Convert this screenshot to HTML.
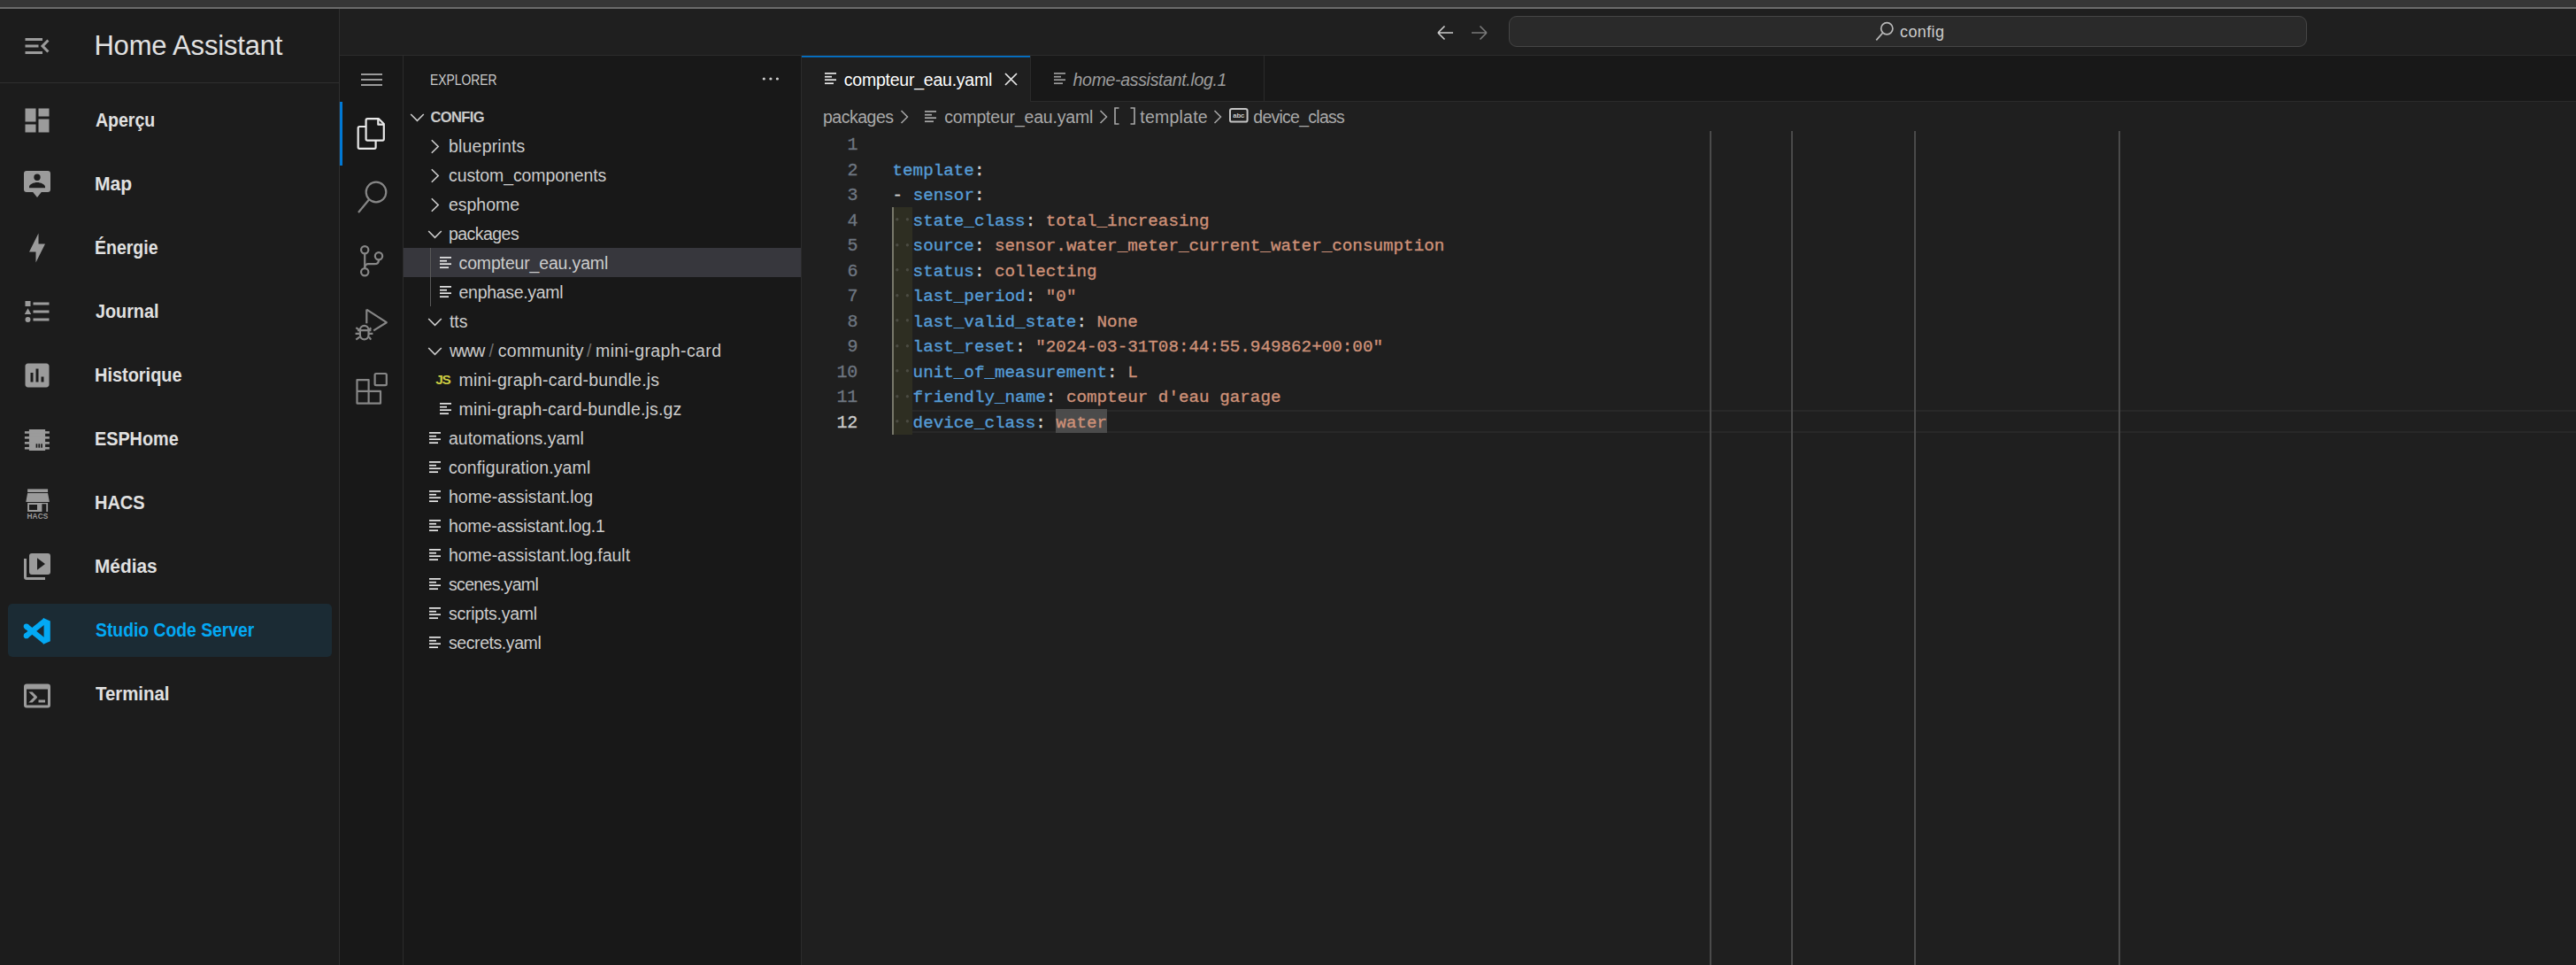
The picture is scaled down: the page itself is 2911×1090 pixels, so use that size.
<!DOCTYPE html><html><head><meta charset="utf-8"><style>html,body{margin:0;padding:0;}body{width:2911px;height:1090px;overflow:hidden;position:relative;background:#1c1c1c;}</style></head><body>
<div style="position:absolute;left:0px;top:0px;width:2911px;height:8px;background:#363636;"></div>
<div style="position:absolute;left:0px;top:8px;width:2911px;height:2px;background:#6b6b6b;"></div>
<div style="position:absolute;left:0px;top:10px;width:383px;height:1080px;background:#1c1c1c;"></div>
<div style="position:absolute;left:383px;top:10px;width:1px;height:1080px;background:#2f2f2f;"></div>
<div style="position:absolute;left:0px;top:93px;width:383px;height:1px;background:#2f2f2f;"></div>
<svg style="position:absolute;left:24px;top:34px;" width="36" height="36" viewBox="0 0 24 24"><path fill="#9b9b9b" d="M21,15.61L19.59,17L14.58,12L19.59,7L21,8.39L17.44,12L21,15.61M3,6H16V8H3V6M3,13V11H13V13H3M3,18V16H16V18H3Z"/></svg>
<div id="t_ha" style="position:absolute;left:106.40px;top:35.76px;font-family:'Liberation Sans', sans-serif;font-size:31px;line-height:31px;color:#e1e1e1;font-weight:normal;font-style:normal;letter-spacing:-0.177px;white-space:pre;">Home Assistant</div>
<svg style="position:absolute;left:24px;top:118px;" width="36" height="36" viewBox="0 0 24 24"><g fill="#9b9b9b"><path d="M13,3V9H21V3M13,21H21V11H13M3,21H11V15H3M3,13H11V3H3V13Z"/></g></svg>
<div id="sb0" style="position:absolute;left:108.00px;top:125.38px;font-family:'Liberation Sans', sans-serif;font-size:22px;line-height:22px;color:#e1e1e1;font-weight:bold;font-style:normal;letter-spacing:0.000px;white-space:pre;transform:scaleX(0.8866);transform-origin:0 0;">Aperçu</div>
<svg style="position:absolute;left:24px;top:190px;" width="36" height="36" viewBox="0 0 24 24"><g fill="#9b9b9b"><path fill-rule="evenodd" d="M4 2H20A2 2 0 0 1 22 4V16A2 2 0 0 1 20 18H15.2L12 22L8.8 18H4A2 2 0 0 1 2 16V4A2 2 0 0 1 4 2ZM12 4.4A2.45 2.45 0 1 0 12 9.3A2.45 2.45 0 1 0 12 4.4ZM6 14.8H18V14C18 12 14.5 10.6 12 10.6S6 12 6 14Z"/></g></svg>
<div id="sb1" style="position:absolute;left:107.00px;top:197.38px;font-family:'Liberation Sans', sans-serif;font-size:22px;line-height:22px;color:#e1e1e1;font-weight:bold;font-style:normal;letter-spacing:0.000px;white-space:pre;transform:scaleX(0.9574);transform-origin:0 0;">Map</div>
<svg style="position:absolute;left:24px;top:262px;" width="36" height="36" viewBox="0 0 24 24"><g fill="#9b9b9b"><path d="M11 15H6L13 1V9H18L11 23V15Z"/></g></svg>
<div id="sb2" style="position:absolute;left:107.00px;top:269.38px;font-family:'Liberation Sans', sans-serif;font-size:22px;line-height:22px;color:#e1e1e1;font-weight:bold;font-style:normal;letter-spacing:0.000px;white-space:pre;transform:scaleX(0.8860);transform-origin:0 0;">Énergie</div>
<svg style="position:absolute;left:24px;top:334px;" width="36" height="36" viewBox="0 0 24 24"><g fill="#9b9b9b"><path d="M5,9.5L7.5,14H2.5L5,9.5M3,4H7V8H3V4M5,20A2,2 0 0,0 7,18A2,2 0 0,0 5,16A2,2 0 0,0 3,18A2,2 0 0,0 5,20M9,5V7H21V5H9M9,19H21V17H9V19M9,13H21V11H9V13Z"/></g></svg>
<div id="sb3" style="position:absolute;left:108.00px;top:341.38px;font-family:'Liberation Sans', sans-serif;font-size:22px;line-height:22px;color:#e1e1e1;font-weight:bold;font-style:normal;letter-spacing:0.000px;white-space:pre;transform:scaleX(0.8990);transform-origin:0 0;">Journal</div>
<svg style="position:absolute;left:24px;top:406px;" width="36" height="36" viewBox="0 0 24 24"><g fill="#9b9b9b"><path d="M19 3H5C3.9 3 3 3.9 3 5V19C3 20.1 3.9 21 5 21H19C20.1 21 21 20.1 21 19V5C21 3.9 20.1 3 19 3M9 17H7V10H9V17M13 17H11V7H13V17M17 17H15V13H17V17Z"/></g></svg>
<div id="sb4" style="position:absolute;left:107.00px;top:413.38px;font-family:'Liberation Sans', sans-serif;font-size:22px;line-height:22px;color:#e1e1e1;font-weight:bold;font-style:normal;letter-spacing:0.000px;white-space:pre;transform:scaleX(0.9063);transform-origin:0 0;">Historique</div>
<svg style="position:absolute;left:0px;top:0px;" width="60" height="600" viewBox="0 0 60 600"><g fill="#9b9b9b"><rect x="32.9" y="485" width="18.2" height="24"/><rect x="27.9" y="487.15" width="28" height="2.6"/><rect x="27.9" y="493.05" width="28" height="2.6"/><rect x="27.9" y="499.05" width="28" height="2.6"/><rect x="27.9" y="504.95" width="28" height="2.6"/></g><g fill="#1c1c1c"><rect x="40.6" y="501.3" width="1.7" height="4.4"/><rect x="43.4" y="501.3" width="1.7" height="4.4"/><rect x="46.2" y="501.3" width="1.7" height="4.4"/></g></svg>
<div id="sb5" style="position:absolute;left:107.00px;top:485.38px;font-family:'Liberation Sans', sans-serif;font-size:22px;line-height:22px;color:#e1e1e1;font-weight:bold;font-style:normal;letter-spacing:0.000px;white-space:pre;transform:scaleX(0.9001);transform-origin:0 0;">ESPHome</div>
<svg style="position:absolute;left:0px;top:0px;" width="60" height="600" viewBox="0 0 60 600"><g fill="#9b9b9b"><rect x="31.1" y="552.4" width="23" height="3.6"/><path d="M31.1 556.9H54.1L55.9 567H29.3Z"/><path fill-rule="evenodd" d="M31.1 568H54.1V578H52.3V569.3H47.4V578H31.1ZM33 570V576H42V570Z"/><text x="42.5" y="586" font-family="Liberation Sans" font-weight="bold" font-size="8.3" text-anchor="middle" letter-spacing="0.15">HACS</text></g></svg>
<div id="sb6" style="position:absolute;left:107.00px;top:557.38px;font-family:'Liberation Sans', sans-serif;font-size:22px;line-height:22px;color:#e1e1e1;font-weight:bold;font-style:normal;letter-spacing:0.000px;white-space:pre;transform:scaleX(0.9068);transform-origin:0 0;">HACS</div>
<svg style="position:absolute;left:24px;top:622px;" width="36" height="36" viewBox="0 0 24 24"><g fill="#9b9b9b"><path d="M4,6H2V20A2,2 0 0,0 4,22H18V20H4V6M20,2H8A2,2 0 0,0 6,4V16A2,2 0 0,0 8,18H20A2,2 0 0,0 22,16V4A2,2 0 0,0 20,2M12,14.5V5.5L18,10L12,14.5Z"/></g></svg>
<div id="sb7" style="position:absolute;left:107.00px;top:629.38px;font-family:'Liberation Sans', sans-serif;font-size:22px;line-height:22px;color:#e1e1e1;font-weight:bold;font-style:normal;letter-spacing:0.000px;white-space:pre;transform:scaleX(0.9463);transform-origin:0 0;">Médias</div>
<div style="position:absolute;left:9px;top:682px;width:366px;height:60px;background:#1b2b34;border-radius:5px;"></div>
<svg style="position:absolute;left:0px;top:0px;" width="60" height="760" viewBox="0 0 60 760"><g stroke="#03a9f4" stroke-width="6.2" fill="none"><path d="M51.5 700.6L29.8 718.2"/><path d="M51.5 725.2L29.8 707.6"/></g><circle cx="29.8" cy="718.2" r="3.1" fill="#03a9f4"/><circle cx="29.8" cy="707.6" r="3.1" fill="#03a9f4"/><path fill="#03a9f4" d="M48.8 698.1L56.8 701.6V724.2L48.8 727.7L49.6 719V706.4Z"/></svg>
<div id="sb8" style="position:absolute;left:108.00px;top:701.38px;font-family:'Liberation Sans', sans-serif;font-size:22px;line-height:22px;color:#03a9f4;font-weight:bold;font-style:normal;letter-spacing:0.000px;white-space:pre;transform:scaleX(0.8783);transform-origin:0 0;">Studio Code Server</div>
<svg style="position:absolute;left:24px;top:767.5px;" width="36" height="36" viewBox="0 0 24 24"><g fill="#9b9b9b"><path d="M20,19V7H4V19H20M20,3A2,2 0 0,1 22,5V19A2,2 0 0,1 20,21H4A2,2 0 0,1 2,19V5C2,3.89 2.9,3 4,3H20M13,17V15H18V17H13M9.58,13L5.57,9H8.4L11.7,12.3C12.09,12.69 12.09,13.33 11.7,13.72L8.42,17H5.59L9.58,13Z"/></g></svg>
<div id="sb9" style="position:absolute;left:108.00px;top:773.38px;font-family:'Liberation Sans', sans-serif;font-size:22px;line-height:22px;color:#e1e1e1;font-weight:bold;font-style:normal;letter-spacing:0.000px;white-space:pre;transform:scaleX(0.9269);transform-origin:0 0;">Terminal</div>
<div style="position:absolute;left:384px;top:10px;width:2527px;height:52px;background:#1f1f1f;"></div>
<div style="position:absolute;left:384px;top:62px;width:2527px;height:1px;background:#2b2b2b;"></div>
<svg style="position:absolute;left:1620px;top:24px;" width="26" height="26" viewBox="0 0 26 26"><path d="M5 13H22M5 13L12.5 5.5M5 13L12.5 20.5" stroke="#cccccc" stroke-width="1.6" fill="none"/></svg>
<svg style="position:absolute;left:1659px;top:24px;" width="26" height="26" viewBox="0 0 26 26"><path d="M21 13H4M21 13L13.5 5.5M21 13L13.5 20.5" stroke="#7a7a7a" stroke-width="1.6" fill="none"/></svg>
<div style="position:absolute;left:1705px;top:18px;width:902px;height:35px;background:#2a2a2a;box-sizing:border-box;border:1px solid #454545;border-radius:9px;"></div>
<svg style="position:absolute;left:2117px;top:23px;" width="26" height="26" viewBox="0 0 26 26"><circle cx="15.3" cy="9.2" r="6.6" stroke="#b8b8b8" stroke-width="1.7" fill="none"/><path d="M10.7 14L3.3 22.4" stroke="#b8b8b8" stroke-width="1.8" fill="none"/></svg>
<div id="t_cfg" style="position:absolute;left:2147.00px;top:26.76px;font-family:'Liberation Sans', sans-serif;font-size:18px;line-height:18px;color:#cccccc;font-weight:normal;font-style:normal;letter-spacing:0.400px;white-space:pre;">config</div>
<div style="position:absolute;left:384px;top:63px;width:71px;height:1027px;background:#181818;"></div>
<div style="position:absolute;left:455px;top:63px;width:1px;height:1027px;background:#2b2b2b;"></div>
<div style="position:absolute;left:408px;top:83px;width:24px;height:2px;background:#9a9a9a;"></div>
<div style="position:absolute;left:408px;top:89px;width:24px;height:2px;background:#9a9a9a;"></div>
<div style="position:absolute;left:408px;top:95px;width:24px;height:2px;background:#9a9a9a;"></div>
<div style="position:absolute;left:384px;top:115px;width:3px;height:72px;background:#0078d4;"></div>
<svg style="position:absolute;left:398px;top:128px;" width="44" height="44" viewBox="0 0 44 44"><g stroke="#e8e8e8" stroke-width="2.2" fill="none" stroke-linejoin="round"><path d="M17.2 6.2H30L35.8 12V29.1A1.6 1.6 0 0 1 34.2 30.7H17.2A1.6 1.6 0 0 1 15.6 29.1V7.8A1.6 1.6 0 0 1 17.2 6.2Z"/><path d="M29.3 6.4V12.7H35.6"/><path d="M15.6 15H8.3A1.6 1.6 0 0 0 6.7 16.6V38.2A1.6 1.6 0 0 0 8.3 39.8H25A1.6 1.6 0 0 0 26.6 38.2V30.7"/></g></svg>
<svg style="position:absolute;left:399px;top:200px;" width="44" height="44" viewBox="0 0 44 44"><g stroke="#868686" stroke-width="2.2" fill="none"><circle cx="26" cy="17" r="11.3"/><path d="M18.2 25.2L6 40"/></g></svg>
<svg style="position:absolute;left:398px;top:272px;" width="44" height="44" viewBox="0 0 44 44"><g stroke="#868686" stroke-width="2.2" fill="none"><circle cx="14.2" cy="10.3" r="4.15"/><circle cx="14.2" cy="35.3" r="4.15"/><circle cx="30" cy="17.3" r="4.15"/><path d="M14.2 14.4V31.2"/><path d="M30 21.4C30 24.6 28.4 26.2 25.4 26.2H18.2C15.9 26.2 14.2 27.6 14.2 30.4"/></g></svg>
<svg style="position:absolute;left:398px;top:344px;" width="44" height="44" viewBox="0 0 44 44"><g stroke="#868686" stroke-width="2.2" fill="none" stroke-linejoin="round"><path d="M16.3 5.6V21.2M16.3 5.6L38.8 20.2L24.2 29.4"/><path d="M8.9 28.6A4.8 4.8 0 0 1 18.5 28.6V34.5A4.8 4.8 0 0 1 8.9 34.5Z"/><path d="M6 29.1H21.4M3.6 32.9H8.9M18.5 32.9H23.4M4.3 26.2L8.4 29M21.2 26.2L19 29M4.3 39.6L8.4 36.6M21.2 39.6L19 36.6"/></g></svg>
<svg style="position:absolute;left:398px;top:416px;" width="44" height="44" viewBox="0 0 44 44"><g stroke="#868686" stroke-width="2.2" fill="none" stroke-linejoin="round"><path d="M5.5 13.1H18.6V39.6H5.5Z M5.5 25.9H32V39.6H18.6"/><rect x="25.6" y="6" width="13.2" height="13.2" rx="1.4"/></g></svg>
<div style="position:absolute;left:456px;top:63px;width:449px;height:1027px;background:#181818;"></div>
<div style="position:absolute;left:905px;top:63px;width:1px;height:1027px;background:#2b2b2b;"></div>
<div id="t_expl" style="position:absolute;left:486.20px;top:82.03px;font-family:'Liberation Sans', sans-serif;font-size:16.5px;line-height:16.5px;color:#cccccc;font-weight:normal;font-style:normal;letter-spacing:0.000px;white-space:pre;transform:scaleX(0.8409);transform-origin:0 0;">EXPLORER</div>
<svg style="position:absolute;left:858px;top:82px;" width="26" height="14" viewBox="0 0 26 14"><g fill="#cccccc"><circle cx="5.3" cy="7" r="1.6"/><circle cx="12.9" cy="7" r="1.6"/><circle cx="20.4" cy="7" r="1.6"/></g></svg>
<svg style="position:absolute;left:463px;top:126.5px;" width="18" height="12" viewBox="0 0 18 12"><path d="M1.2 2L8.5 9.3L15.8 2" stroke="#cccccc" stroke-width="1.6" fill="none"/></svg>
<div id="tr0" style="position:absolute;left:486.40px;top:123.53px;font-family:'Liberation Sans', sans-serif;font-size:16.5px;line-height:16.5px;color:#cccccc;font-weight:bold;font-style:normal;letter-spacing:-0.580px;white-space:pre;">CONFIG</div>
<svg style="position:absolute;left:486px;top:157.0px;" width="12" height="18" viewBox="0 0 12 18"><path d="M1.8 1.2L9.2 8.5L1.8 15.8" stroke="#cccccc" stroke-width="1.6" fill="none"/></svg>
<div id="tr1" style="position:absolute;left:507.00px;top:156.49px;font-family:'Liberation Sans', sans-serif;font-size:19.5px;line-height:19.5px;color:#cccccc;font-weight:normal;font-style:normal;letter-spacing:0.193px;white-space:pre;">blueprints</div>
<svg style="position:absolute;left:486px;top:190.0px;" width="12" height="18" viewBox="0 0 12 18"><path d="M1.8 1.2L9.2 8.5L1.8 15.8" stroke="#cccccc" stroke-width="1.6" fill="none"/></svg>
<div id="tr2" style="position:absolute;left:507.00px;top:189.49px;font-family:'Liberation Sans', sans-serif;font-size:19.5px;line-height:19.5px;color:#cccccc;font-weight:normal;font-style:normal;letter-spacing:-0.108px;white-space:pre;">custom_components</div>
<svg style="position:absolute;left:486px;top:223.0px;" width="12" height="18" viewBox="0 0 12 18"><path d="M1.8 1.2L9.2 8.5L1.8 15.8" stroke="#cccccc" stroke-width="1.6" fill="none"/></svg>
<div id="tr3" style="position:absolute;left:507.00px;top:222.49px;font-family:'Liberation Sans', sans-serif;font-size:19.5px;line-height:19.5px;color:#cccccc;font-weight:normal;font-style:normal;letter-spacing:-0.035px;white-space:pre;">esphome</div>
<svg style="position:absolute;left:482.5px;top:259.0px;" width="18" height="12" viewBox="0 0 18 12"><path d="M1.2 2L8.5 9.3L15.8 2" stroke="#cccccc" stroke-width="1.6" fill="none"/></svg>
<div id="tr4" style="position:absolute;left:507.00px;top:255.49px;font-family:'Liberation Sans', sans-serif;font-size:19.5px;line-height:19.5px;color:#cccccc;font-weight:normal;font-style:normal;letter-spacing:-0.549px;white-space:pre;">packages</div>
<div style="position:absolute;left:456px;top:280px;width:449px;height:33px;background:#37373d;"></div>
<svg style="position:absolute;left:497px;top:290.0px;" width="14" height="14" viewBox="0 0 14 14"><g fill="#e8e8e8"><rect x="0" y="0.05" width="13" height="1.7"/><rect x="0" y="3.85" width="8" height="1.7"/><rect x="0" y="7.35" width="13" height="1.7"/><rect x="0" y="11.35" width="10" height="1.7"/></g></svg>
<div id="tr5" style="position:absolute;left:518.60px;top:288.49px;font-family:'Liberation Sans', sans-serif;font-size:19.5px;line-height:19.5px;color:#cccccc;font-weight:normal;font-style:normal;letter-spacing:-0.164px;white-space:pre;">compteur_eau.yaml</div>
<svg style="position:absolute;left:497px;top:323.0px;" width="14" height="14" viewBox="0 0 14 14"><g fill="#e8e8e8"><rect x="0" y="0.05" width="13" height="1.7"/><rect x="0" y="3.85" width="8" height="1.7"/><rect x="0" y="7.35" width="13" height="1.7"/><rect x="0" y="11.35" width="10" height="1.7"/></g></svg>
<div id="tr6" style="position:absolute;left:518.60px;top:321.49px;font-family:'Liberation Sans', sans-serif;font-size:19.5px;line-height:19.5px;color:#cccccc;font-weight:normal;font-style:normal;letter-spacing:-0.315px;white-space:pre;">enphase.yaml</div>
<svg style="position:absolute;left:482.5px;top:358.0px;" width="18" height="12" viewBox="0 0 18 12"><path d="M1.2 2L8.5 9.3L15.8 2" stroke="#cccccc" stroke-width="1.6" fill="none"/></svg>
<div id="tr7" style="position:absolute;left:508.00px;top:354.49px;font-family:'Liberation Sans', sans-serif;font-size:19.5px;line-height:19.5px;color:#cccccc;font-weight:normal;font-style:normal;letter-spacing:-0.100px;white-space:pre;">tts</div>
<svg style="position:absolute;left:482.5px;top:391.0px;" width="18" height="12" viewBox="0 0 18 12"><path d="M1.2 2L8.5 9.3L15.8 2" stroke="#cccccc" stroke-width="1.6" fill="none"/></svg>
<div id="trw1" style="position:absolute;left:508.00px;top:387.49px;font-family:'Liberation Sans', sans-serif;font-size:19.5px;line-height:19.5px;color:#cccccc;font-weight:normal;font-style:normal;letter-spacing:-1.000px;white-space:pre;">www</div>
<div style="position:absolute;left:552.50px;top:387.49px;font-family:'Liberation Sans', sans-serif;font-size:19.5px;line-height:19.5px;color:#6f6f6f;font-weight:normal;font-style:normal;letter-spacing:0.000px;white-space:pre;">/</div>
<div id="trw3" style="position:absolute;left:562.80px;top:387.49px;font-family:'Liberation Sans', sans-serif;font-size:19.5px;line-height:19.5px;color:#cccccc;font-weight:normal;font-style:normal;letter-spacing:0.300px;white-space:pre;">community</div>
<div style="position:absolute;left:663.00px;top:387.49px;font-family:'Liberation Sans', sans-serif;font-size:19.5px;line-height:19.5px;color:#6f6f6f;font-weight:normal;font-style:normal;letter-spacing:0.000px;white-space:pre;">/</div>
<div id="trw5" style="position:absolute;left:673.00px;top:387.49px;font-family:'Liberation Sans', sans-serif;font-size:19.5px;line-height:19.5px;color:#cccccc;font-weight:normal;font-style:normal;letter-spacing:0.394px;white-space:pre;">mini-graph-card</div>
<div style="position:absolute;left:492.30px;top:421.46px;font-family:'Liberation Sans', sans-serif;font-size:15.4px;line-height:15.4px;color:#cbcb41;font-weight:bold;font-style:normal;letter-spacing:-1.300px;white-space:pre;">JS</div>
<div id="tr9" style="position:absolute;left:518.60px;top:420.49px;font-family:'Liberation Sans', sans-serif;font-size:19.5px;line-height:19.5px;color:#cccccc;font-weight:normal;font-style:normal;letter-spacing:0.225px;white-space:pre;">mini-graph-card-bundle.js</div>
<svg style="position:absolute;left:497px;top:455.0px;" width="14" height="14" viewBox="0 0 14 14"><g fill="#e8e8e8"><rect x="0" y="0.05" width="13" height="1.7"/><rect x="0" y="3.85" width="8" height="1.7"/><rect x="0" y="7.35" width="13" height="1.7"/><rect x="0" y="11.35" width="10" height="1.7"/></g></svg>
<div id="tr10" style="position:absolute;left:518.60px;top:453.49px;font-family:'Liberation Sans', sans-serif;font-size:19.5px;line-height:19.5px;color:#cccccc;font-weight:normal;font-style:normal;letter-spacing:0.168px;white-space:pre;">mini-graph-card-bundle.js.gz</div>
<svg style="position:absolute;left:484.5px;top:488.0px;" width="14" height="14" viewBox="0 0 14 14"><g fill="#e8e8e8"><rect x="0" y="0.05" width="13" height="1.7"/><rect x="0" y="3.85" width="8" height="1.7"/><rect x="0" y="7.35" width="13" height="1.7"/><rect x="0" y="11.35" width="10" height="1.7"/></g></svg>
<div id="tr11" style="position:absolute;left:507.00px;top:486.49px;font-family:'Liberation Sans', sans-serif;font-size:19.5px;line-height:19.5px;color:#cccccc;font-weight:normal;font-style:normal;letter-spacing:0.000px;white-space:pre;">automations.yaml</div>
<svg style="position:absolute;left:484.5px;top:521.0px;" width="14" height="14" viewBox="0 0 14 14"><g fill="#e8e8e8"><rect x="0" y="0.05" width="13" height="1.7"/><rect x="0" y="3.85" width="8" height="1.7"/><rect x="0" y="7.35" width="13" height="1.7"/><rect x="0" y="11.35" width="10" height="1.7"/></g></svg>
<div id="tr12" style="position:absolute;left:507.00px;top:519.49px;font-family:'Liberation Sans', sans-serif;font-size:19.5px;line-height:19.5px;color:#cccccc;font-weight:normal;font-style:normal;letter-spacing:0.117px;white-space:pre;">configuration.yaml</div>
<svg style="position:absolute;left:484.5px;top:554.0px;" width="14" height="14" viewBox="0 0 14 14"><g fill="#e8e8e8"><rect x="0" y="0.05" width="13" height="1.7"/><rect x="0" y="3.85" width="8" height="1.7"/><rect x="0" y="7.35" width="13" height="1.7"/><rect x="0" y="11.35" width="10" height="1.7"/></g></svg>
<div id="tr13" style="position:absolute;left:507.00px;top:552.49px;font-family:'Liberation Sans', sans-serif;font-size:19.5px;line-height:19.5px;color:#cccccc;font-weight:normal;font-style:normal;letter-spacing:-0.028px;white-space:pre;">home-assistant.log</div>
<svg style="position:absolute;left:484.5px;top:587.0px;" width="14" height="14" viewBox="0 0 14 14"><g fill="#e8e8e8"><rect x="0" y="0.05" width="13" height="1.7"/><rect x="0" y="3.85" width="8" height="1.7"/><rect x="0" y="7.35" width="13" height="1.7"/><rect x="0" y="11.35" width="10" height="1.7"/></g></svg>
<div id="tr14" style="position:absolute;left:507.00px;top:585.49px;font-family:'Liberation Sans', sans-serif;font-size:19.5px;line-height:19.5px;color:#cccccc;font-weight:normal;font-style:normal;letter-spacing:-0.158px;white-space:pre;">home-assistant.log.1</div>
<svg style="position:absolute;left:484.5px;top:620.0px;" width="14" height="14" viewBox="0 0 14 14"><g fill="#e8e8e8"><rect x="0" y="0.05" width="13" height="1.7"/><rect x="0" y="3.85" width="8" height="1.7"/><rect x="0" y="7.35" width="13" height="1.7"/><rect x="0" y="11.35" width="10" height="1.7"/></g></svg>
<div id="tr15" style="position:absolute;left:507.00px;top:618.49px;font-family:'Liberation Sans', sans-serif;font-size:19.5px;line-height:19.5px;color:#cccccc;font-weight:normal;font-style:normal;letter-spacing:-0.038px;white-space:pre;">home-assistant.log.fault</div>
<svg style="position:absolute;left:484.5px;top:653.0px;" width="14" height="14" viewBox="0 0 14 14"><g fill="#e8e8e8"><rect x="0" y="0.05" width="13" height="1.7"/><rect x="0" y="3.85" width="8" height="1.7"/><rect x="0" y="7.35" width="13" height="1.7"/><rect x="0" y="11.35" width="10" height="1.7"/></g></svg>
<div id="tr16" style="position:absolute;left:507.00px;top:651.49px;font-family:'Liberation Sans', sans-serif;font-size:19.5px;line-height:19.5px;color:#cccccc;font-weight:normal;font-style:normal;letter-spacing:-0.660px;white-space:pre;">scenes.yaml</div>
<svg style="position:absolute;left:484.5px;top:686.0px;" width="14" height="14" viewBox="0 0 14 14"><g fill="#e8e8e8"><rect x="0" y="0.05" width="13" height="1.7"/><rect x="0" y="3.85" width="8" height="1.7"/><rect x="0" y="7.35" width="13" height="1.7"/><rect x="0" y="11.35" width="10" height="1.7"/></g></svg>
<div id="tr17" style="position:absolute;left:507.00px;top:684.49px;font-family:'Liberation Sans', sans-serif;font-size:19.5px;line-height:19.5px;color:#cccccc;font-weight:normal;font-style:normal;letter-spacing:-0.257px;white-space:pre;">scripts.yaml</div>
<svg style="position:absolute;left:484.5px;top:719.0px;" width="14" height="14" viewBox="0 0 14 14"><g fill="#e8e8e8"><rect x="0" y="0.05" width="13" height="1.7"/><rect x="0" y="3.85" width="8" height="1.7"/><rect x="0" y="7.35" width="13" height="1.7"/><rect x="0" y="11.35" width="10" height="1.7"/></g></svg>
<div id="tr18" style="position:absolute;left:507.00px;top:717.49px;font-family:'Liberation Sans', sans-serif;font-size:19.5px;line-height:19.5px;color:#cccccc;font-weight:normal;font-style:normal;letter-spacing:-0.428px;white-space:pre;">secrets.yaml</div>
<div style="position:absolute;left:486px;top:280px;width:1px;height:66px;background:#585858;"></div>
<div style="position:absolute;left:906px;top:63px;width:2005px;height:1027px;background:#1f1f1f;"></div>
<div style="position:absolute;left:906px;top:63px;width:2005px;height:52px;background:#181818;"></div>
<div style="position:absolute;left:906px;top:114px;width:2005px;height:1px;background:#2b2b2b;"></div>
<div style="position:absolute;left:906px;top:63px;width:258px;height:52px;background:#1f1f1f;"></div>
<div style="position:absolute;left:906px;top:63px;width:258px;height:1px;background:#0078d4;"></div>
<div style="position:absolute;left:906px;top:64px;width:258px;height:1px;background:#0b5a99;"></div>
<div style="position:absolute;left:1164px;top:63px;width:1px;height:52px;background:#2b2b2b;"></div>
<svg style="position:absolute;left:931.5px;top:81.5px;" width="14" height="14" viewBox="0 0 14 14"><g fill="#e8e8e8"><rect x="0" y="0.05" width="13" height="1.7"/><rect x="0" y="3.85" width="8" height="1.7"/><rect x="0" y="7.35" width="13" height="1.7"/><rect x="0" y="11.35" width="10" height="1.7"/></g></svg>
<div id="t_tab1" style="position:absolute;left:953.80px;top:80.99px;font-family:'Liberation Sans', sans-serif;font-size:19.5px;line-height:19.5px;color:#ffffff;font-weight:normal;font-style:normal;letter-spacing:-0.233px;white-space:pre;">compteur_eau.yaml</div>
<svg style="position:absolute;left:1134px;top:81px;" width="17" height="17" viewBox="0 0 17 17"><path d="M2 2L15 15M15 2L2 15" stroke="#e8e8e8" stroke-width="1.7"/></svg>
<div style="position:absolute;left:1428px;top:63px;width:1px;height:51px;background:#2b2b2b;"></div>
<svg style="position:absolute;left:1190.5px;top:81.5px;" width="14" height="14" viewBox="0 0 14 14"><g fill="#9d9d9d"><rect x="0" y="0.05" width="13" height="1.7"/><rect x="0" y="3.85" width="8" height="1.7"/><rect x="0" y="7.35" width="13" height="1.7"/><rect x="0" y="11.35" width="10" height="1.7"/></g></svg>
<div id="t_tab2" style="position:absolute;left:1212.60px;top:80.99px;font-family:'Liberation Sans', sans-serif;font-size:19.5px;line-height:19.5px;color:#9d9d9d;font-weight:normal;font-style:italic;letter-spacing:-0.324px;white-space:pre;">home-assistant.log.1</div>
<div id="t_bc1" style="position:absolute;left:930.00px;top:122.99px;font-family:'Liberation Sans', sans-serif;font-size:19.5px;line-height:19.5px;color:#a9a9a9;font-weight:normal;font-style:normal;letter-spacing:-0.500px;white-space:pre;">packages</div>
<svg style="position:absolute;left:1017px;top:124px;" width="11" height="16" viewBox="0 0 11 16"><path d="M1.5 1L8.5 8L1.5 15" stroke="#a9a9a9" stroke-width="1.5" fill="none"/></svg>
<svg style="position:absolute;left:1045px;top:124.5px;" width="14" height="14" viewBox="0 0 14 14"><g fill="#a9a9a9"><rect x="0" y="0.05" width="13" height="1.7"/><rect x="0" y="3.85" width="8" height="1.7"/><rect x="0" y="7.35" width="13" height="1.7"/><rect x="0" y="11.35" width="10" height="1.7"/></g></svg>
<div id="t_bc2" style="position:absolute;left:1067.20px;top:122.99px;font-family:'Liberation Sans', sans-serif;font-size:19.5px;line-height:19.5px;color:#a9a9a9;font-weight:normal;font-style:normal;letter-spacing:-0.196px;white-space:pre;">compteur_eau.yaml</div>
<svg style="position:absolute;left:1242px;top:124px;" width="11" height="16" viewBox="0 0 11 16"><path d="M1.5 1L8.5 8L1.5 15" stroke="#a9a9a9" stroke-width="1.5" fill="none"/></svg>
<svg style="position:absolute;left:1258px;top:121px;" width="26" height="20" viewBox="0 0 26 20"><path d="M6.5 1H2V19H6.5M19.5 1H24V19H19.5" stroke="#a9a9a9" stroke-width="1.6" fill="none"/></svg>
<div id="t_bc3" style="position:absolute;left:1288.30px;top:122.99px;font-family:'Liberation Sans', sans-serif;font-size:19.5px;line-height:19.5px;color:#a9a9a9;font-weight:normal;font-style:normal;letter-spacing:0.222px;white-space:pre;">template</div>
<svg style="position:absolute;left:1371px;top:124px;" width="11" height="16" viewBox="0 0 11 16"><path d="M1.5 1L8.5 8L1.5 15" stroke="#a9a9a9" stroke-width="1.5" fill="none"/></svg>
<svg style="position:absolute;left:1388px;top:121px;" width="24" height="19" viewBox="0 0 24 19"><rect x="2" y="2" width="19.6" height="14.6" rx="2.2" stroke="#c4c4c4" stroke-width="2" fill="none"/><text x="11.8" y="12.3" font-family="Liberation Sans" font-weight="bold" font-size="7.8" fill="#c8c8c8" text-anchor="middle" letter-spacing="-0.1">abc</text></svg>
<div id="t_bc4" style="position:absolute;left:1416.30px;top:122.99px;font-family:'Liberation Sans', sans-serif;font-size:19.5px;line-height:19.5px;color:#a9a9a9;font-weight:normal;font-style:normal;letter-spacing:-0.746px;white-space:pre;">device_class</div>
<div style="position:absolute;left:1008px;top:463px;width:1903px;height:2px;background:#282828;"></div>
<div style="position:absolute;left:1008px;top:487px;width:1903px;height:2px;background:#282828;"></div>
<div style="position:absolute;left:1932px;top:148px;width:2px;height:942px;background:#4a4a4a;"></div>
<div style="position:absolute;left:2024px;top:148px;width:2px;height:942px;background:#4a4a4a;"></div>
<div style="position:absolute;left:2163px;top:148px;width:2px;height:942px;background:#4a4a4a;"></div>
<div style="position:absolute;left:2394px;top:148px;width:2px;height:942px;background:#4a4a4a;"></div>
<div style="position:absolute;left:1008px;top:234.0px;width:23px;height:256.5px;background:#2e2e22;"></div>
<div style="position:absolute;left:1008px;top:234.0px;width:2px;height:256.5px;background:#77776a;"></div>
<div style="position:absolute;left:1193px;top:462.0px;width:58px;height:27px;background:#4b4b4b;"></div>
<div style="position:absolute;left:957.45px;top:153.68px;font-family:'Liberation Mono', monospace;font-size:20px;line-height:20px;color:#6e7681;font-weight:normal;font-style:normal;letter-spacing:-0.450px;white-space:pre;-webkit-text-stroke:0.3px;">1</div>
<div style="position:absolute;left:957.45px;top:182.68px;font-family:'Liberation Mono', monospace;font-size:20px;line-height:20px;color:#6e7681;font-weight:normal;font-style:normal;letter-spacing:-0.450px;white-space:pre;-webkit-text-stroke:0.3px;">2</div>
<div style="position:absolute;left:1008.50px;top:184.25px;font-family:'Liberation Mono', monospace;font-size:19.25px;line-height:19.25px;color:#d4d4d4;font-weight:normal;font-style:normal;letter-spacing:0.000px;white-space:pre;-webkit-text-stroke:0.35px;"><span style="color:#569cd6">template</span><span style="color:#d4d4d4">:</span></div>
<div style="position:absolute;left:957.45px;top:210.68px;font-family:'Liberation Mono', monospace;font-size:20px;line-height:20px;color:#6e7681;font-weight:normal;font-style:normal;letter-spacing:-0.450px;white-space:pre;-webkit-text-stroke:0.3px;">3</div>
<div style="position:absolute;left:1008.50px;top:212.25px;font-family:'Liberation Mono', monospace;font-size:19.25px;line-height:19.25px;color:#d4d4d4;font-weight:normal;font-style:normal;letter-spacing:0.000px;white-space:pre;-webkit-text-stroke:0.35px;"><span style="color:#d4d4d4">-</span><span style="color:#d4d4d4"> </span><span style="color:#569cd6">sensor</span><span style="color:#d4d4d4">:</span></div>
<div style="position:absolute;left:957.45px;top:239.68px;font-family:'Liberation Mono', monospace;font-size:20px;line-height:20px;color:#6e7681;font-weight:normal;font-style:normal;letter-spacing:-0.450px;white-space:pre;-webkit-text-stroke:0.3px;">4</div>
<svg style="position:absolute;left:1008px;top:234.0px;" width="23" height="28" viewBox="0 0 23 28"><g fill="#4b4b42"><circle cx="5.8" cy="13.8" r="1.7"/><circle cx="17.4" cy="13.8" r="1.7"/></g></svg>
<div style="position:absolute;left:1031.60px;top:241.25px;font-family:'Liberation Mono', monospace;font-size:19.25px;line-height:19.25px;color:#d4d4d4;font-weight:normal;font-style:normal;letter-spacing:0.000px;white-space:pre;-webkit-text-stroke:0.35px;"><span style="color:#569cd6">state_class</span><span style="color:#d4d4d4">:</span><span style="color:#ce9178"> total_increasing</span></div>
<div style="position:absolute;left:957.45px;top:267.68px;font-family:'Liberation Mono', monospace;font-size:20px;line-height:20px;color:#6e7681;font-weight:normal;font-style:normal;letter-spacing:-0.450px;white-space:pre;-webkit-text-stroke:0.3px;">5</div>
<svg style="position:absolute;left:1008px;top:262.5px;" width="23" height="28" viewBox="0 0 23 28"><g fill="#4b4b42"><circle cx="5.8" cy="13.8" r="1.7"/><circle cx="17.4" cy="13.8" r="1.7"/></g></svg>
<div style="position:absolute;left:1031.60px;top:269.25px;font-family:'Liberation Mono', monospace;font-size:19.25px;line-height:19.25px;color:#d4d4d4;font-weight:normal;font-style:normal;letter-spacing:0.000px;white-space:pre;-webkit-text-stroke:0.35px;"><span style="color:#569cd6">source</span><span style="color:#d4d4d4">:</span><span style="color:#ce9178"> sensor.water_meter_current_water_consumption</span></div>
<div style="position:absolute;left:957.45px;top:296.68px;font-family:'Liberation Mono', monospace;font-size:20px;line-height:20px;color:#6e7681;font-weight:normal;font-style:normal;letter-spacing:-0.450px;white-space:pre;-webkit-text-stroke:0.3px;">6</div>
<svg style="position:absolute;left:1008px;top:291.0px;" width="23" height="28" viewBox="0 0 23 28"><g fill="#4b4b42"><circle cx="5.8" cy="13.8" r="1.7"/><circle cx="17.4" cy="13.8" r="1.7"/></g></svg>
<div style="position:absolute;left:1031.60px;top:298.25px;font-family:'Liberation Mono', monospace;font-size:19.25px;line-height:19.25px;color:#d4d4d4;font-weight:normal;font-style:normal;letter-spacing:0.000px;white-space:pre;-webkit-text-stroke:0.35px;"><span style="color:#569cd6">status</span><span style="color:#d4d4d4">:</span><span style="color:#ce9178"> collecting</span></div>
<div style="position:absolute;left:957.45px;top:324.68px;font-family:'Liberation Mono', monospace;font-size:20px;line-height:20px;color:#6e7681;font-weight:normal;font-style:normal;letter-spacing:-0.450px;white-space:pre;-webkit-text-stroke:0.3px;">7</div>
<svg style="position:absolute;left:1008px;top:319.5px;" width="23" height="28" viewBox="0 0 23 28"><g fill="#4b4b42"><circle cx="5.8" cy="13.8" r="1.7"/><circle cx="17.4" cy="13.8" r="1.7"/></g></svg>
<div style="position:absolute;left:1031.60px;top:326.25px;font-family:'Liberation Mono', monospace;font-size:19.25px;line-height:19.25px;color:#d4d4d4;font-weight:normal;font-style:normal;letter-spacing:0.000px;white-space:pre;-webkit-text-stroke:0.35px;"><span style="color:#569cd6">last_period</span><span style="color:#d4d4d4">:</span><span style="color:#ce9178"> "0"</span></div>
<div style="position:absolute;left:957.45px;top:353.68px;font-family:'Liberation Mono', monospace;font-size:20px;line-height:20px;color:#6e7681;font-weight:normal;font-style:normal;letter-spacing:-0.450px;white-space:pre;-webkit-text-stroke:0.3px;">8</div>
<svg style="position:absolute;left:1008px;top:348.0px;" width="23" height="28" viewBox="0 0 23 28"><g fill="#4b4b42"><circle cx="5.8" cy="13.8" r="1.7"/><circle cx="17.4" cy="13.8" r="1.7"/></g></svg>
<div style="position:absolute;left:1031.60px;top:355.25px;font-family:'Liberation Mono', monospace;font-size:19.25px;line-height:19.25px;color:#d4d4d4;font-weight:normal;font-style:normal;letter-spacing:0.000px;white-space:pre;-webkit-text-stroke:0.35px;"><span style="color:#569cd6">last_valid_state</span><span style="color:#d4d4d4">:</span><span style="color:#ce9178"> None</span></div>
<div style="position:absolute;left:957.45px;top:381.68px;font-family:'Liberation Mono', monospace;font-size:20px;line-height:20px;color:#6e7681;font-weight:normal;font-style:normal;letter-spacing:-0.450px;white-space:pre;-webkit-text-stroke:0.3px;">9</div>
<svg style="position:absolute;left:1008px;top:376.5px;" width="23" height="28" viewBox="0 0 23 28"><g fill="#4b4b42"><circle cx="5.8" cy="13.8" r="1.7"/><circle cx="17.4" cy="13.8" r="1.7"/></g></svg>
<div style="position:absolute;left:1031.60px;top:383.25px;font-family:'Liberation Mono', monospace;font-size:19.25px;line-height:19.25px;color:#d4d4d4;font-weight:normal;font-style:normal;letter-spacing:0.000px;white-space:pre;-webkit-text-stroke:0.35px;"><span style="color:#569cd6">last_reset</span><span style="color:#d4d4d4">:</span><span style="color:#ce9178"> "2024-03-31T08:44:55.949862+00:00"</span></div>
<div style="position:absolute;left:945.60px;top:410.68px;font-family:'Liberation Mono', monospace;font-size:20px;line-height:20px;color:#6e7681;font-weight:normal;font-style:normal;letter-spacing:-0.450px;white-space:pre;-webkit-text-stroke:0.3px;">10</div>
<svg style="position:absolute;left:1008px;top:405.0px;" width="23" height="28" viewBox="0 0 23 28"><g fill="#4b4b42"><circle cx="5.8" cy="13.8" r="1.7"/><circle cx="17.4" cy="13.8" r="1.7"/></g></svg>
<div style="position:absolute;left:1031.60px;top:412.25px;font-family:'Liberation Mono', monospace;font-size:19.25px;line-height:19.25px;color:#d4d4d4;font-weight:normal;font-style:normal;letter-spacing:0.000px;white-space:pre;-webkit-text-stroke:0.35px;"><span style="color:#569cd6">unit_of_measurement</span><span style="color:#d4d4d4">:</span><span style="color:#ce9178"> L</span></div>
<div style="position:absolute;left:945.60px;top:438.68px;font-family:'Liberation Mono', monospace;font-size:20px;line-height:20px;color:#6e7681;font-weight:normal;font-style:normal;letter-spacing:-0.450px;white-space:pre;-webkit-text-stroke:0.3px;">11</div>
<svg style="position:absolute;left:1008px;top:433.5px;" width="23" height="28" viewBox="0 0 23 28"><g fill="#4b4b42"><circle cx="5.8" cy="13.8" r="1.7"/><circle cx="17.4" cy="13.8" r="1.7"/></g></svg>
<div style="position:absolute;left:1031.60px;top:440.25px;font-family:'Liberation Mono', monospace;font-size:19.25px;line-height:19.25px;color:#d4d4d4;font-weight:normal;font-style:normal;letter-spacing:0.000px;white-space:pre;-webkit-text-stroke:0.35px;"><span style="color:#569cd6">friendly_name</span><span style="color:#d4d4d4">:</span><span style="color:#ce9178"> compteur d'eau garage</span></div>
<div style="position:absolute;left:945.60px;top:467.68px;font-family:'Liberation Mono', monospace;font-size:20px;line-height:20px;color:#cccccc;font-weight:normal;font-style:normal;letter-spacing:-0.450px;white-space:pre;-webkit-text-stroke:0.3px;">12</div>
<svg style="position:absolute;left:1008px;top:462.0px;" width="23" height="28" viewBox="0 0 23 28"><g fill="#4b4b42"><circle cx="5.8" cy="13.8" r="1.7"/><circle cx="17.4" cy="13.8" r="1.7"/></g></svg>
<div style="position:absolute;left:1031.60px;top:469.25px;font-family:'Liberation Mono', monospace;font-size:19.25px;line-height:19.25px;color:#d4d4d4;font-weight:normal;font-style:normal;letter-spacing:0.000px;white-space:pre;-webkit-text-stroke:0.35px;"><span style="color:#569cd6">device_class</span><span style="color:#d4d4d4">:</span><span style="color:#ce9178"> water</span></div>
</body></html>
